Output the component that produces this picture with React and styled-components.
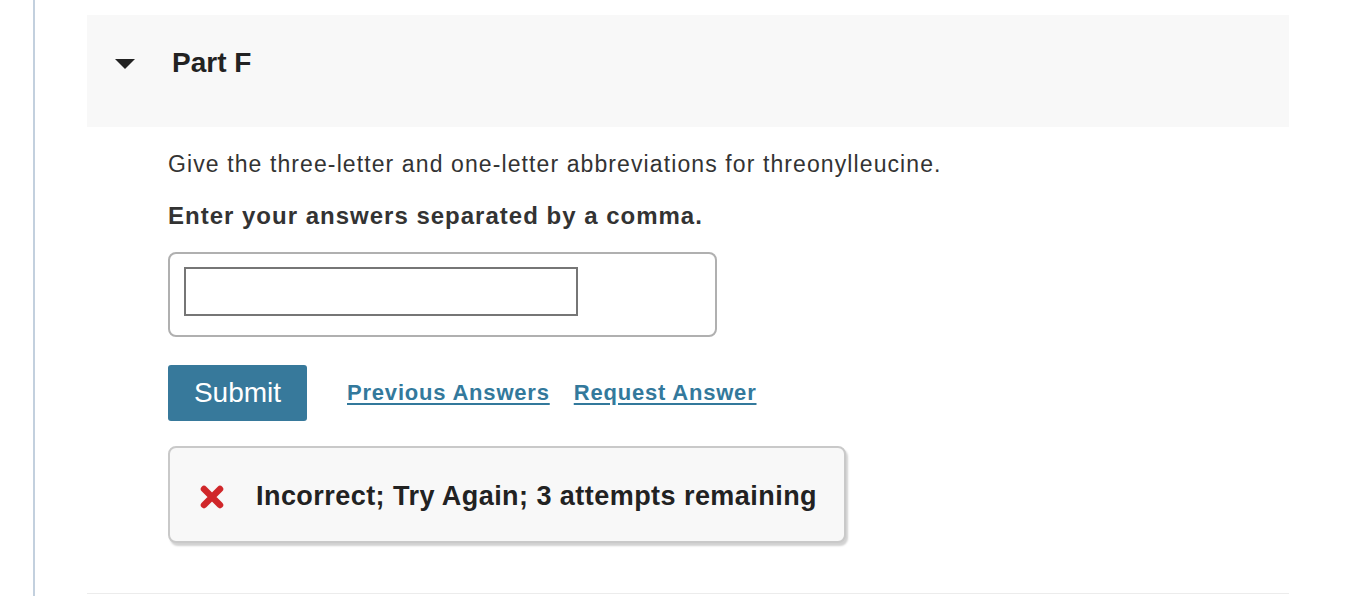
import React from 'react';
import styled, { createGlobalStyle } from 'styled-components';

const linkBlue = '#33799c';
const textDark = '#333';

const GlobalStyle = createGlobalStyle`
  html, body {
    margin: 0;
    padding: 0;
    background: #fff;
  }
  body {
    font-family: 'Liberation Sans', Arial, Helvetica, sans-serif;
    color: ${textDark};
  }
`;

const Page = styled.div`
  display: flex;
  min-height: 596px;
  padding-left: 33px;
  box-sizing: border-box;
`;

const Rail = styled.div`
  width: 2px;
  background: #c3d0de;
  flex-shrink: 0;
`;

const Content = styled.div`
  flex: 1;
  padding: 15px 75px 0 52px;
`;

const PartHeader = styled.div`
  display: flex;
  align-items: center;
  gap: 37px;
  height: 112px;
  padding: 0 0 17px 28px;
  background: #f8f8f8;
  box-sizing: border-box;
`;

const Caret = styled.span`
  width: 0;
  height: 0;
  border-left: 10px solid transparent;
  border-right: 10px solid transparent;
  border-top: 10px solid #222;
  margin-top: 2px;
`;

const PartTitle = styled.h2`
  margin: 0;
  font-size: 28px;
  font-weight: 700;
  color: #222;
`;

const PartBody = styled.div`
  padding: 22px 0 50px 81px;
  border-bottom: 1px solid #ececec;
`;

const Question = styled.p`
  margin: 0;
  font-size: 23px;
  letter-spacing: 1.1px;
  line-height: 30px;
`;

const Instruction = styled.p`
  margin: 22px 0 0;
  font-size: 24px;
  letter-spacing: 1px;
  line-height: 30px;
  font-weight: 700;
`;

const AnswerFrame = styled.div`
  width: 549px;
  height: 85px;
  margin-top: 21px;
  padding: 13px 14px;
  box-sizing: border-box;
  border: 2px solid #b0b0b0;
  border-radius: 8px;
`;

const AnswerInput = styled.input`
  display: block;
  width: 394px;
  height: 49px;
  box-sizing: border-box;
  border: 2px solid #767676;
  border-radius: 0;
  font-size: 20px;
  font-family: inherit;
  outline: none;
`;

const ActionRow = styled.div`
  display: flex;
  align-items: center;
  gap: 24px;
  margin-top: 28px;
`;

const SubmitButton = styled.button`
  width: 139px;
  height: 56px;
  margin-right: 16px;
  padding: 0;
  background: #37799b;
  color: #fff;
  border: none;
  border-radius: 3px;
  font-family: inherit;
  font-size: 28px;
  cursor: pointer;
`;

const ActionLink = styled.a`
  color: ${linkBlue};
  font-size: 22px;
  letter-spacing: 0.8px;
  font-weight: 700;
  text-decoration: underline;
  text-underline-offset: 3px;
  cursor: pointer;
`;

const Feedback = styled.div`
  display: flex;
  align-items: center;
  gap: 31px;
  width: 678px;
  height: 97px;
  margin-top: 25px;
  padding: 4px 0 0 29px;
  box-sizing: border-box;
  background: #f8f8f8;
  border: 2px solid #c9c9c9;
  border-radius: 8px;
  box-shadow: 2px 3px 2px rgba(0, 0, 0, 0.18);
`;

const FeedbackText = styled.span`
  font-size: 27px;
  letter-spacing: 0.45px;
  font-weight: 700;
  color: #222;
`;

const CrossIcon = () => (
  <svg width="26" height="26" viewBox="0 0 26 26">
    <path
      d="M5 5 L21 21 M21 5 L5 21"
      stroke="#d0272a"
      strokeWidth="6.5"
      strokeLinecap="round"
    />
  </svg>
);

export default function App() {
  return (
    <>
      <GlobalStyle />
      <Page>
        <Rail />
        <Content>
          <PartHeader>
            <Caret />
            <PartTitle>Part F</PartTitle>
          </PartHeader>
          <PartBody>
            <Question>Give the three-letter and one-letter abbreviations for threonylleucine.</Question>
            <Instruction>Enter your answers separated by a comma.</Instruction>
            <AnswerFrame>
              <AnswerInput type="text" aria-label="answer" />
            </AnswerFrame>
            <ActionRow>
              <SubmitButton>Submit</SubmitButton>
              <ActionLink>Previous Answers</ActionLink>
              <ActionLink>Request Answer</ActionLink>
            </ActionRow>
            <Feedback>
              <CrossIcon />
              <FeedbackText>Incorrect; Try Again; 3 attempts remaining</FeedbackText>
            </Feedback>
          </PartBody>
        </Content>
      </Page>
    </>
  );
}
